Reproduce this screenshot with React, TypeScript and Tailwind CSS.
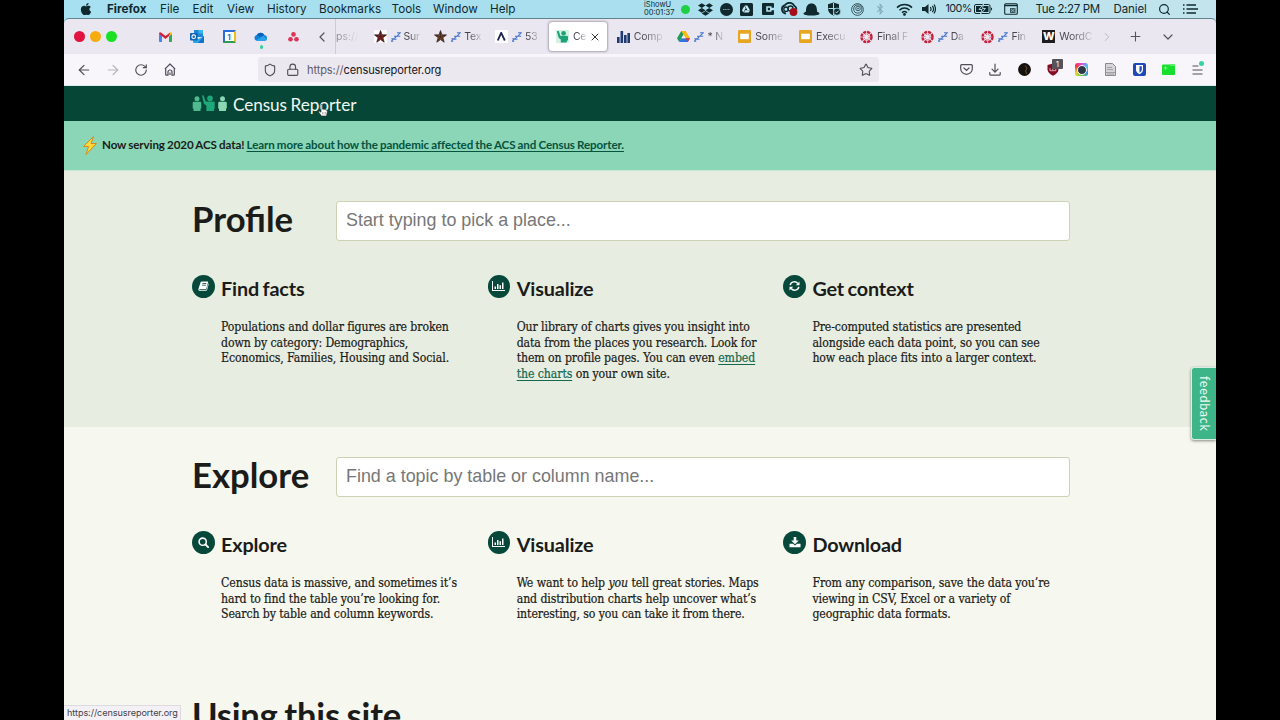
import type { ReactNode } from "react";
import {
  ArrowLeft,
  ArrowRight,
  ChevronDown,
  ChevronLeft,
  ChevronRight,
  Lock,
  Plus,
  RotateCw,
  Search,
  Shield,
  Star,
  X,
} from "lucide-react";
import { FaApple, FaBluetoothB, FaDropbox, FaGoogleDrive } from "react-icons/fa";

const MENUS = [
  { label: "Firefox", cls: "w-[53px] font-bold" },
  { label: "File", cls: "w-[32.5px]" },
  { label: "Edit", cls: "w-[34.5px]" },
  { label: "View", cls: "w-[40px]" },
  { label: "History", cls: "w-[52px]" },
  { label: "Bookmarks", cls: "w-[72.5px]" },
  { label: "Tools", cls: "w-[41.5px]" },
  { label: "Window", cls: "w-[57px]" },
  { label: "Help", cls: "w-[30px]" },
];

function Slot({ className, children }: { className: string; children?: ReactNode }) {
  return <div className={`flex h-full shrink-0 items-center justify-center ${className}`}>{children}</div>;
}

function MenuBar() {
  return (
    <div className="flex h-[18px] shrink-0 items-center bg-linear-to-r from-[#a6e0f1] via-[#a9dfee] to-[#c3e4ec] text-[11.7px] text-[#10292f]">
      <Slot className="w-[43px]">
        <FaApple size={14} />
      </Slot>
      <div className="flex w-[537px] pt-[2px]">
        {MENUS.map((m) => (
          <span key={m.label} className={`shrink-0 whitespace-nowrap ${m.cls}`}>
            {m.label}
          </span>
        ))}
      </div>
      <div className="flex w-[34px] flex-col text-[7.5px] leading-[8px] whitespace-nowrap">
        <span>iShowU</span>
        <span>00:01:37</span>
      </div>
      <Slot className="w-[14px]">
        <span className="size-[9px] rounded-full bg-[#1fd045]" />
      </Slot>
      <Slot className="w-[27px]">
        <FaDropbox size={15} />
      </Slot>
      <Slot className="w-[14px]">
        <svg width="13" height="13" viewBox="0 0 13 13">
          <circle cx="6.5" cy="6.5" r="6.5" fill="currentColor" />
          <path d="M3 6.5h7" stroke="#6fa0aa" strokeWidth="1.2" strokeDasharray="1.2 .5" />
        </svg>
      </Slot>
      <Slot className="w-[26px]">
        <span className="flex size-[13px] items-center justify-center rounded-[1.5px] bg-[#10292f] text-[#c6ecf5]">
          <FaGoogleDrive size={8} />
        </span>
      </Slot>
      <Slot className="w-[18px]">
        <svg width="12" height="12" viewBox="0 0 12 12">
          <rect width="12" height="12" rx="1" fill="currentColor" />
          <path d="M12 4.8H9.5V3.2H4.2v5.6h5.3V7.2H12z" fill="#b3e3ef" />
          <path d="M5.8 4.8h2.2v2.4H5.8z" fill="#10292f" />
        </svg>
      </Slot>
      <Slot className="w-[24px]">
        <svg width="17" height="14" viewBox="0 0 17 14" fill="none" stroke="currentColor">
          <path d="M5 11.5a4.3 4.3 0 0 1-1-8.4A5.5 5.5 0 0 1 13.5 4a4 4 0 0 1 2 3.5" strokeWidth="1.8" />
          <circle cx="5" cy="7.2" r="2.2" strokeWidth="1.3" />
          <circle cx="9.5" cy="6.5" r="2.5" strokeWidth="1.3" />
          <circle cx="12.5" cy="10" r="3.9" fill="#a50d1b" stroke="none" />
        </svg>
      </Slot>
      <Slot className="w-[21px]">
        <svg width="17" height="13" viewBox="0 0 17 13" fill="currentColor">
          <path d="M3 8.5C2.8 3 5 .5 8.5.5S14.2 3 14 8.5c1 .8 2.5 1 2.5 2C16.5 12 13 12.5 8.5 12.5S.5 12 .5 10.5c0-1 1.5-1.2 2.5-2z" />
        </svg>
      </Slot>
      <Slot className="w-[24px]">
        <svg width="14" height="14" viewBox="0 0 14 14">
          <path d="M6.5.5 12 2.3v4.2C12 10 9.5 12.5 6.5 13.5 3.5 12.5 1 10 1 6.5V2.3z" fill="currentColor" />
          <path d="M6.5 1v12M1.5 6.5h10" stroke="#a9dfee" />
          <circle cx="10" cy="9.7" r="3.6" fill="currentColor" stroke="#a9dfee" strokeWidth=".8" />
          <path d="m8.4 9.7 1.2 1.2 2-2.2" stroke="#c5ebf3" fill="none" />
        </svg>
      </Slot>
      <Slot className="w-[22px] opacity-75">
        <svg width="13" height="13" viewBox="0 0 13 13" fill="none" stroke="currentColor">
          <circle cx="6.5" cy="6.5" r="5.9" />
          <circle cx="6.8" cy="6" r="4.1" />
          <circle cx="7" cy="5.5" r="2.3" />
          <circle cx="7" cy="5.5" r=".6" />
        </svg>
      </Slot>
      <Slot className="w-[24px] opacity-30">
        <FaBluetoothB size={12} />
      </Slot>
      <Slot className="w-[25px]">
        <svg width="17" height="13" viewBox="0 0 17 13" fill="none" stroke="currentColor" strokeWidth="1.5">
          <path d="M1 4.6a10.6 10.6 0 0 1 15 0M3.5 7.2a7 7 0 0 1 10 0M6 9.7a3.6 3.6 0 0 1 5 0" />
          <circle cx="8.5" cy="11.4" r=".7" fill="currentColor" />
        </svg>
      </Slot>
      <Slot className="w-[23px]">
        <svg width="14" height="12" viewBox="0 0 14 12" fill="none" stroke="currentColor" strokeWidth="1.2">
          <path d="M0 4h3l3.5-3v10L3 8H0z" fill="currentColor" stroke="none" />
          <path d="M8.3 4c.9 1.2.9 2.8 0 4M10.3 2.8c1.6 2 1.6 4.4 0 6.4M12 1.5c2 3 2 6 0 9" />
        </svg>
      </Slot>
      <span className="w-[33.5px] pt-px pl-[5.5px] text-[10.8px] tracking-[-0.55px]">100%</span>
      <svg width="19" height="10" viewBox="0 0 19 10" className="shrink-0">
        <rect x=".5" y=".5" width="15.5" height="9" rx="1.5" fill="none" stroke="currentColor" />
        <path d="M2 2h12.5v6H2z" fill="currentColor" />
        <path d="M17 3.5c1.5.3 1.5 2.7 0 3z" fill="currentColor" />
        <path d="M9.5 0 5 5.5h3L6.5 10l5-5.5h-3z" fill="currentColor" stroke="#b5e1ec" strokeWidth=".9" />
      </svg>
      <Slot className="w-[36px]">
        <svg width="14" height="12" viewBox="0 0 14 12" fill="none" stroke="currentColor">
          <rect x=".7" y=".7" width="12.6" height="10.6" rx="1" strokeWidth="1.1" />
          <path d="M.7 2.5h12.6" strokeWidth="1.5" />
          <path d="M6 5h5.5v5H6z" fill="currentColor" stroke="none" opacity=".75" />
          <path d="M7 6l3.5 3M10.5 6 7 9" stroke="#b9e2ec" strokeWidth=".6" />
        </svg>
      </Slot>
      <span className="w-[85px] pt-[2px] pl-[7px] text-[11.5px] tracking-[-0.35px] whitespace-nowrap">Tue 2:27 PM</span>
      <span className="w-[36px] pt-[2px] text-[11.5px] tracking-[-0.1px] whitespace-nowrap">Daniel</span>
      <Slot className="w-[30px]">
        <Search size={13} strokeWidth={2.2} />
      </Slot>
      <Slot className="w-[21px]">
        <svg width="15" height="10" viewBox="0 0 15 10" stroke="currentColor" strokeWidth="1.4">
          <path d="M0 1h1.5M0 5h1.5M0 9h1.5M3.5 1h9.5M3.5 5H15M3.5 9H13" />
        </svg>
      </Slot>
    </div>
  );
}

function Gmail() {
  return (
    <svg width="13" height="10" viewBox="0 0 13 10">
      <path d="M0 2v7.2q0 .8.8.8H3V4z" fill="#4285f4" />
      <path d="M13 2v7.2q0 .8-.8.8H10V4z" fill="#34a853" />
      <path d="M10 4V1.5l1-.9q2-1 2 1.4z" fill="#fbbc04" />
      <path d="M0 2Q0-.4 2 .6L6.5 4 11 .6 10 4 6.5 7 3 4.3V10 4.5z" fill="#d5203a" />
    </svg>
  );
}

function Outlook() {
  return (
    <svg width="14" height="13" viewBox="0 0 14 13">
      <path d="M4 0h9v7H4z" fill="#1b86d6" />
      <path d="M8.5 0H13v3.5H8.5z" fill="#38b6f1" />
      <path d="M3 6l5.5 3L14 6v6q0 1-1 1H4q-1 0-1-1z" fill="#2aa5e8" />
      <path d="M14 6v6q0 1-1 1H8z" fill="#1172c4" />
      <rect y="3" width="7.5" height="7.5" rx=".7" fill="#0f65b5" />
      <circle cx="3.7" cy="6.7" r="1.8" fill="none" stroke="#fff" strokeWidth="1.1" />
    </svg>
  );
}

function Calendar() {
  return (
    <span className="flex size-[13px] items-center justify-center rounded-[1px] border-2 border-t-[#2b6be0] border-r-[#f5bd16] border-b-[#2f9e50] border-l-[#2b6be0] bg-white text-[8px] leading-none font-bold text-[#2b6be0]">
      1
    </span>
  );
}

function OneDrive() {
  return (
    <svg width="14" height="9" viewBox="0 0 14 9">
      <path d="M3 8.8a2.9 2.9 0 0 1-.3-5.7A4.2 4.2 0 0 1 10.3 3a3 3 0 0 1 .8 5.8z" fill="#1182d8" />
      <path d="M2.7 3.1A4.2 4.2 0 0 1 10.3 3L6 5z" fill="#0b62b8" />
      <path d="m2 8.5 7.5-4.8 3.5 3.8q-.8 1.3-2 1.3H3z" fill="#28a3ea" />
    </svg>
  );
}

function Asana() {
  return (
    <svg width="11" height="10" viewBox="0 0 11 10" fill="#dc3258">
      <circle cx="5.5" cy="2.4" r="2.3" />
      <circle cx="2.5" cy="7.3" r="2.3" />
      <circle cx="8.5" cy="7.3" r="2.3" />
    </svg>
  );
}

function TexasStar({ color }: { color: string }) {
  return (
    <svg width="13" height="13" viewBox="0 0 13 13">
      <path
        d="M6.5.5 8 4.8l4.5.1L8.9 7.7l1.3 4.5-3.7-2.6-3.7 2.6 1.3-4.5L.5 4.9 5 4.8z"
        fill={color}
        stroke="#2c2020"
        strokeWidth=".7"
      />
      <path d="M6.5 2v5L3.5 11M6.5 7l5-2M6.5 7l3 4M6.5 7l-5-2" stroke="#2c2020" strokeWidth=".6" fill="none" />
    </svg>
  );
}

function Lambda() {
  return (
    <span className="flex size-[13px] items-center justify-center bg-white">
      <svg width="9" height="9" viewBox="0 0 9 9">
        <path d="M.8 8.5 4.2.8l3.6 7.7" fill="none" stroke="#1d2550" strokeWidth="1.8" />
      </svg>
    </span>
  );
}

function CensusFavicon() {
  return (
    <svg width="13" height="13" viewBox="0 0 13 13">
      <rect width="13" height="13" fill="#d6f0e2" />
      <circle cx="7.6" cy="3.2" r="2.3" fill="#1ba377" />
      <path d="M.8 1.5 2.8.8l1.4 4.9h6.3q1.5 0 1.5 1.4v3.4h-1.2v2H4.8V9.5L2.8 8z" fill="#1ba377" />
    </svg>
  );
}

function Bars() {
  return (
    <svg width="13" height="12" viewBox="0 0 13 12" fill="#1f3a70">
      <path d="M0 6h2.6v6H0zM3.5 0h2.6v12H3.5zM7 4h2.6v8H7zM10.4 2H13v10h-2.6z" />
    </svg>
  );
}

function Drive() {
  return (
    <svg width="13" height="11" viewBox="0 0 13 11">
      <path d="M4.3 0h4.4L2.2 11 0 7.3z" fill="#1f9d55" />
      <path d="M4.3 0h4.4L13 7.3H8.6z" fill="#f9bb12" />
      <path d="M4.3 7.3H13L10.8 11H2.2z" fill="#2f72e2" />
      <path d="M8.6 7.3H13L10.8 11z" fill="#dd3a30" />
      <path d="m6.5 3.8 2.1 3.5H4.4z" fill="#ebe7f0" />
    </svg>
  );
}

function Slides() {
  return (
    <svg width="13" height="13" viewBox="0 0 13 13">
      <rect width="13" height="13" rx="1.3" fill="#e6a61f" />
      <rect x="2.2" y="3.7" width="8.6" height="5.5" fill="#fff" />
    </svg>
  );
}

function Canvas() {
  return (
    <svg width="14" height="14" viewBox="0 0 14 14" fill="none">
      <circle cx="7" cy="7" r="5.4" stroke="#c5203c" strokeWidth="2.6" strokeDasharray="3.3 .94" />
      <circle cx="7" cy="7" r="2.9" stroke="#c5203c" strokeWidth="1" strokeDasharray=".9 1.38" />
    </svg>
  );
}

function WordIcon() {
  return (
    <span className="flex size-[13px] items-center justify-center bg-[#1d1d1f] text-[11px] leading-none font-extrabold text-white">
      W
    </span>
  );
}

function Zzz() {
  return (
    <svg width="10" height="10" viewBox="0 0 10 10" fill="none" stroke="#4a78cc" strokeWidth="1.1" className="mr-[3px] shrink-0">
      <path d="M.3 6.8h2L.3 9.3h2M3 4.2h2.5L3 7.2h2.5M6 .7h3.2L6 4.2h3.2" />
    </svg>
  );
}

const TABS = [
  { icon: <TexasStar color="#8f2020" />, zzz: true, title: "Sur", plate: true },
  { icon: <TexasStar color="#754822" />, zzz: true, title: "Tex" },
  { icon: <Lambda />, zzz: true, title: "53" },
  { icon: <CensusFavicon />, title: "Ce", active: true },
  { icon: <Bars />, title: "Comp" },
  { icon: <Drive />, zzz: true, title: "* N" },
  { icon: <Slides />, title: "Some" },
  { icon: <Slides />, title: "Execu" },
  { icon: <Canvas />, title: "Final F" },
  { icon: <Canvas />, zzz: true, title: "Da" },
  { icon: <Canvas />, zzz: true, title: "Fin" },
  { icon: <WordIcon />, title: "WordC" },
];

function TabStrip() {
  return (
    <div className="flex h-[36px] shrink-0 items-center rounded-t-[5px] border-t border-[#62838d] bg-[#ebe7f0] text-[10.5px] text-[#55535c]">
      <div className="flex w-[85px] items-center gap-[5.5px] pl-[10px]">
        <span className="size-[10.5px] rounded-full bg-[#e0143f]" />
        <span className="size-[10.5px] rounded-full bg-[#f6ac0e]" />
        <span className="size-[10.5px] rounded-full bg-[#1be026]" />
      </div>
      <Slot className="w-[32px]"><Gmail /></Slot>
      <Slot className="w-[32px]"><Outlook /></Slot>
      <Slot className="w-[32px]"><Calendar /></Slot>
      <Slot className="relative w-[32px]">
        <OneDrive />
        <span className="absolute top-[26px] left-[14.5px] size-[3.5px] rounded-full bg-[#32d3a0]" />
      </Slot>
      <Slot className="w-[32px]"><Asana /></Slot>
      <Slot className="w-[26px]"><ChevronLeft size={16} strokeWidth={1.8} /></Slot>
      <div className="flex h-full w-[31.5px] items-center border-l border-[#cfcbd5]">
        <span className="bg-linear-to-r from-[#85828b] to-[#ebe7f0] bg-clip-text text-transparent">ps://</span>
      </div>
      {TABS.map((t, i) => (
        <div key={i} className="h-[29px] w-[60.8px] shrink-0 pr-[3px]">
          <div className={t.active ? "flex h-full items-center rounded-[3px] bg-white pl-[7px] shadow-[0_0_2px_1px_rgba(90,85,105,.45)]" : "flex h-full items-center pl-[7px]"}>
            <span className={t.plate ? "flex w-[13px] shrink-0 justify-center bg-[#fbfafc]" : "flex w-[13px] shrink-0 justify-center"}>{t.icon}</span>
            <div className="ml-[4px] flex flex-1 items-center pt-px">
              {t.zzz && <Zzz />}
              <span className="bg-linear-to-r from-[#45434c] from-35% to-[#45434c]/15 bg-clip-text tracking-[-0.2px] whitespace-nowrap text-transparent">
                {t.title}
              </span>
            </div>
            {t.active && <X size={12} strokeWidth={2} className="mr-[6px] shrink-0 text-[#333]" />}
          </div>
        </div>
      ))}
      <Slot className="w-[22px] text-[#bcb8c3]"><ChevronRight size={14} strokeWidth={1.7} /></Slot>
      <Slot className="w-[35px]"><Plus size={15} strokeWidth={1.7} /></Slot>
      <Slot className="w-[29px]"><ChevronDown size={16} strokeWidth={1.8} /></Slot>
    </div>
  );
}

function NavBar() {
  return (
    <div className="flex h-[32px] shrink-0 items-center border-b border-[#dcebed] bg-[#f8f5fb] pl-[5px] text-[#504e58]">
      <Slot className="w-[29px]"><ArrowLeft size={16} strokeWidth={1.8} /></Slot>
      <Slot className="w-[29px] text-[#b6b3bc]"><ArrowRight size={16} strokeWidth={1.8} /></Slot>
      <Slot className="w-[28px]"><RotateCw size={14} strokeWidth={2} /></Slot>
      <Slot className="w-[29px]">
        <svg width="12" height="13" viewBox="0 0 12 13" fill="none" stroke="currentColor" strokeWidth="1.2" strokeLinejoin="round">
          <path d="M.8 6.2 6 1l5.2 5.2M1.7 5.5v6q0 .7.7.7H4V9a2 2 0 0 1 4 0v3.2h1.6q.7 0 .7-.7v-6M6 12V9.5" />
        </svg>
      </Slot>
      <div className="ml-[74px] flex h-[25px] w-[621px] items-center rounded-[3px] bg-[#ece8f0]">
        <Slot className="w-[24px]"><Shield size={14} strokeWidth={1.9} /></Slot>
        <Slot className="w-[21px]"><Lock size={13.5} strokeWidth={2} /></Slot>
        <span className="ml-[4px] flex-1 pt-[2px] text-[11.1px] tracking-[-0.12px] text-[#5f5c67]">
          https://<span className="text-[#17161b]">censusreporter.org</span>
        </span>
        <Slot className="w-[26px]"><Star size={14} strokeWidth={1.9} /></Slot>
      </div>
      <Slot className="ml-[73px] w-[29px]">
        <svg width="13" height="11" viewBox="0 0 13 11" fill="none" stroke="currentColor" strokeWidth="1.2" strokeLinecap="round">
          <path d="M1.7.7h9.6q1 0 1 1v3a5.8 5.6 0 0 1-11.6 0v-3q0-1 1-1z" />
          <path d="m4 4 2.5 2.4L9 4" />
        </svg>
      </Slot>
      <Slot className="w-[28px]">
        <svg width="12" height="13" viewBox="0 0 12 13" fill="none" stroke="currentColor" strokeWidth="1.2" strokeLinecap="round">
          <path d="M6 1v8M3 6.2 6 9.2l3-3M.8 9.5v1.7q0 1 1 1h8.4q1 0 1-1V9.5" />
        </svg>
      </Slot>
      <Slot className="w-[30px]">
        <svg width="13" height="13" viewBox="0 0 13 13">
          <circle cx="6.5" cy="6.5" r="6.4" fill="#15110f" />
          <path d="M7 2.5 9 5 7.5 8.5 9 11" stroke="#5a4027" strokeWidth="1.2" fill="none" />
        </svg>
      </Slot>
      <Slot className="relative w-[28px]">
        <svg width="12" height="13" viewBox="0 0 12 13">
          <path d="M6 .5 11.5 2v4.5Q11 10.5 6 12.7 1 10.5.5 6.5V2z" fill="#820e24" />
          <path d="M3 5v2.7h2.8V5.5M5.8 7.7h3V5" stroke="#dba5af" fill="none" />
        </svg>
        <span className="absolute top-[5px] left-[13px] flex h-[10px] w-[11px] items-center justify-center rounded-[1px] bg-[#55535a] text-[8px] leading-none text-white">1</span>
      </Slot>
      <Slot className="w-[29px]">
        <span className="flex size-[13px] items-center justify-center rounded-[2.5px] bg-conic-[from_0deg,#e743e8,#3ccbe8,#2f8de0,#65d64d,#f3d02b,#f33c3c,#e743e8]">
          <span className="size-[10px] rounded-full border-[1.5px] border-white bg-[#2d3748]" />
        </span>
      </Slot>
      <Slot className="w-[29px]">
        <svg width="11" height="13" viewBox="0 0 11 13" stroke="#8b8990">
          <path d="M.5.5h7l3 3v9H.5z" fill="#d6d4d8" />
          <path d="M2 4.5h5M2 6.5h6M.5 9.5h10M2 11h7" strokeWidth=".7" />
        </svg>
      </Slot>
      <Slot className="w-[28px]">
        <svg width="13" height="13" viewBox="0 0 13 13">
          <rect width="13" height="13" rx="2" fill="#1f49b6" />
          <path d="M3 2h7v4.5Q10 9.5 6.5 11.3 3 9.5 3 6.5z" fill="#fff" />
          <path d="M6.5 3.2h2.3v3.3q0 2-2.3 3.3z" fill="#1f49b6" />
        </svg>
      </Slot>
      <Slot className="w-[30px]">
        <svg width="13" height="11" viewBox="0 0 13 11">
          <rect y=".5" width="13" height="10.5" rx="1" fill="#16e02d" />
          <path d="M3.5 2v4M1.5 4h4" stroke="#a7f7ad" strokeWidth=".7" />
          <path d="M8 0h5v2H8z" fill="#5cf06a" />
        </svg>
      </Slot>
      <Slot className="relative w-[28px]">
        <svg width="11" height="10" viewBox="0 0 11 10" stroke="currentColor" strokeWidth="1.2">
          <path d="M.5 1h6M.5 5h10M.5 9h10" />
        </svg>
        <span className="absolute top-[7px] left-[15.5px] size-[5px] rounded-full bg-[#35d4a6]" />
      </Slot>
    </div>
  );
}

function BookGlyph() {
  return (
    <svg width="11" height="10" viewBox="0 0 11 10">
      <path d="M3.6.5h6q.7 0 .5.7L8.4 7.5q-.2.7-.9.7H2q-.8 0-.6.7h6.3q.8 0 1-.7l1.6-6 .4.8-1.6 6q-.3.8-1.1.8H1.3Q0 9.4.4 8L2.6 1.2q.2-.7 1-.7z" fill="#fff" />
      <path d="M4.5 2.5h3.8M4 4.2h3.8" stroke="#06493a" strokeWidth=".8" />
    </svg>
  );
}

function ChartGlyph() {
  return (
    <svg width="13" height="10" viewBox="0 0 13 10" fill="#fff">
      <path d="M0 0h1v9h12v1H0zM2.5 5.5h1.5V8H2.5zM5 3h1.5v5H5zM7.5 4.2H9V8H7.5zM10 1.5h1.5V8H10z" />
    </svg>
  );
}

function RefreshGlyph() {
  return (
    <svg width="11" height="10" viewBox="0 0 11 10" fill="none" stroke="#fff" strokeWidth="1.4">
      <path d="M1.2 4.2A4.2 4 0 0 1 8.8 2.5M9.8 5.8A4.2 4 0 0 1 2.2 7.5" />
      <path d="M10.5.5v3.7H6.8zM.5 9.5V5.8h3.7z" fill="#fff" stroke="none" />
    </svg>
  );
}

function SearchGlyph() {
  return (
    <svg width="11" height="11" viewBox="0 0 11 11" fill="none" stroke="#fff">
      <circle cx="4.7" cy="4.7" r="3.6" strokeWidth="1.6" />
      <path d="m7.5 7.5 2.6 2.6" strokeWidth="1.9" strokeLinecap="round" />
    </svg>
  );
}

function DownloadGlyph() {
  return (
    <svg width="12" height="11" viewBox="0 0 12 11" fill="#fff">
      <path d="M4.7 0h2.6v3.5h2.5L6 7.3 2.2 3.5h2.5zM.5 6.8H4l2 1.8 2-1.8h3.5v3.4H.5z" />
    </svg>
  );
}

interface FeatureProps {
  icon: ReactNode;
  title: string;
  children: ReactNode;
}

function Feature({ icon, title, children }: FeatureProps) {
  return (
    <div className="flex w-[295.7px] shrink-0">
      <span className="mt-[1px] flex size-[22.5px] shrink-0 items-center justify-center rounded-full bg-[#06493a]">{icon}</span>
      <div className="ml-[6.5px]">
        <h2 className="font-[Lato,sans-serif] text-[19.8px] leading-[28px] font-bold tracking-[-0.14px] [word-spacing:-1.2px]">{title}</h2>
        <p className="mt-[18px] font-['DejaVu_Serif_Condensed','DejaVu_Serif',serif] text-[12.2px] leading-[15.6px] tracking-[-0.09px] whitespace-nowrap [font-stretch:condensed] [-webkit-text-stroke:0.2px]">
          {children}
        </p>
      </div>
    </div>
  );
}

interface SectionProps {
  title: string;
  placeholder: string;
  className: string;
  children: ReactNode;
}

function Section({ title, placeholder, className, children }: SectionProps) {
  return (
    <section className={`shrink-0 pl-[128px] ${className}`}>
      <div className="flex items-center pt-[30px]">
        <h1 className="w-[144px] pb-[4px] font-[Lato,sans-serif] text-[34.7px] leading-[34px] font-bold">{title}</h1>
        <input
          placeholder={placeholder}
          className="h-[40px] w-[734px] rounded-[3px] border border-[#cdd2b4] bg-white px-[9px] pb-[2px] font-['Liberation_Sans',sans-serif] text-[17.9px] placeholder:text-[#777]"
        />
      </div>
      <div className="mt-[33px] flex">{children}</div>
    </section>
  );
}

function CensusLogo() {
  return (
    <svg width="36" height="18" viewBox="0 0 36 18">
      <g fill="#4fba90">
        <circle cx="5" cy="3.8" r="2.5" />
        <path d="M2 6.8h6q1.3 0 1.3 1.3v5.4h-.8V16h-7v-2.500H.7V8.100Q.7 6.800 2 6.800z" />
      </g>
      <g fill="#1ca879">
        <circle cx="18" cy="3.4" r="2.8" />
        <path d="m10 .6 1.5-.4 2.2 6.200h7.700q1.300 0 1.300 1.300v5.800H22V16h-7.600v-5.200L11.800 8.500z" />
      </g>
      <g fill="#8bd6b3">
        <circle cx="30.500" cy="3.800" r="2.500" />
        <path d="M27.500 6.800h6q1.300 0 1.300 1.300v5.400H34V16h-7v-2.500h-.8V8.100q0-1.300 1.300-1.300z" />
      </g>
    </svg>
  );
}

function Page() {
  return (
    <main className="flex min-h-0 flex-1 flex-col overflow-hidden bg-[#f6f7ee] text-[#1b1c19]">
      <header className="flex h-[35px] shrink-0 items-center bg-[#064636] pl-[128px]">
        <CensusLogo />
        <span className="mt-[2px] ml-[5px] font-[Lato,sans-serif] text-[17.2px] tracking-[-0.08px] text-[#eef8f3] [word-spacing:-0.7px]">Census Reporter</span>
      </header>
      <div className="flex h-[50px] shrink-0 items-center border-b border-[#c8e7d5] bg-[#8ad6b6] pb-px pl-[19px] font-[Lato,sans-serif] text-[11.6px] font-bold tracking-[-0.11px] [word-spacing:-0.5px]">
        <svg width="14" height="19" viewBox="0 0 14 19" className="mr-[5px]">
          <path d="M10.5.5.5 10.5h5L3 18.5l10.5-11H8z" fill="#ffd93c" stroke="#d28d1d" strokeWidth="1" strokeLinejoin="round" />
        </svg>
        <p className="whitespace-nowrap">
          Now serving 2020 ACS data!{" "}
          <a className="text-[#06533f] underline underline-offset-2">
            Learn more about how the pandemic affected the ACS and Census Reporter.
          </a>
        </p>
      </div>
      <Section title="Profile" placeholder="Start typing to pick a place..." className="h-[256px] bg-[#e8ede2]">
        <Feature icon={<BookGlyph />} title="Find facts">
          Populations and dollar figures are broken
          <br />
          down by category: Demographics,
          <br />
          Economics, Families, Housing and Social.
        </Feature>
        <Feature icon={<ChartGlyph />} title="Visualize">
          Our library of charts gives you insight into
          <br />
          data from the places you research. Look for
          <br />
          them on profile pages. You can even <a className="text-[#13684d] underline underline-offset-2">embed</a>
          <br />
          <a className="text-[#13684d] underline underline-offset-2">the charts</a> on your own site.
        </Feature>
        <Feature icon={<RefreshGlyph />} title="Get context">
          Pre-computed statistics are presented
          <br />
          alongside each data point, so you can see
          <br />
          how each place fits into a larger context.
        </Feature>
      </Section>
      <Section title="Explore" placeholder="Find a topic by table or column name..." className="h-[268px]">
        <Feature icon={<SearchGlyph />} title="Explore">
          Census data is massive, and sometimes it’s
          <br />
          hard to find the table you’re looking for.
          <br />
          Search by table and column keywords.
        </Feature>
        <Feature icon={<ChartGlyph />} title="Visualize">
          We want to help <em>you</em> tell great stories. Maps
          <br />
          and distribution charts help uncover what’s
          <br />
          interesting, so you can take it from there.
        </Feature>
        <Feature icon={<DownloadGlyph />} title="Download">
          From any comparison, save the data you’re
          <br />
          viewing in CSV, Excel or a variety of
          <br />
          geographic data formats.
        </Feature>
      </Section>
      <h1 className="shrink-0 pl-[128px] font-[Lato,sans-serif] text-[34.6px] leading-[40px] font-bold tracking-[-0.2px] [word-spacing:-1.5px]">
        Using this site
      </h1>
    </main>
  );
}

export default function App() {
  return (
    <div className="flex h-[720px] w-[1280px] justify-center overflow-hidden bg-black font-[Inter,sans-serif]">
      <div className="relative flex w-[1152px] flex-col overflow-hidden bg-[#a9dfee]">
        <MenuBar />
        <TabStrip />
        <NavBar />
        <Page />
        <div className="absolute top-[367px] right-0 flex h-[73px] w-[25px] items-center justify-center rounded-l-[3px] border border-r-0 border-[#d8eee2] bg-[#3eb489] shadow-[0_1px_3px_rgba(0,0,0,.45)]">
          <span className="font-[Lato,sans-serif] text-[12.5px] tracking-[0.7px] text-[#e9faf2] [writing-mode:vertical-rl]">feedback</span>
        </div>
        <div className="absolute bottom-0 left-0 flex h-[15px] w-[117px] items-center border-t border-r border-[#dddbe0] bg-[#f3f1f5] pl-[3px] text-[9.1px] tracking-[-0.07px] whitespace-nowrap text-[#45434a]">
          https://censusreporter.org
        </div>
        <svg width="10" height="13" viewBox="0 0 10 13" className="absolute top-[104px] left-[254px]">
          <path
            d="M3 .8q1-.8 1.5.3v4l3.5.7q1.5.3 1.3 2L8.5 12h-5L.8 8.2q-.5-1.2.7-1L3 8.2z"
            fill="#fff"
            stroke="#333"
            strokeWidth=".6"
          />
          <path d="M4.5 8v2.5M6 8v2.5M7.5 8v2.5" stroke="#777" strokeWidth=".5" />
        </svg>
      </div>
    </div>
  );
}
